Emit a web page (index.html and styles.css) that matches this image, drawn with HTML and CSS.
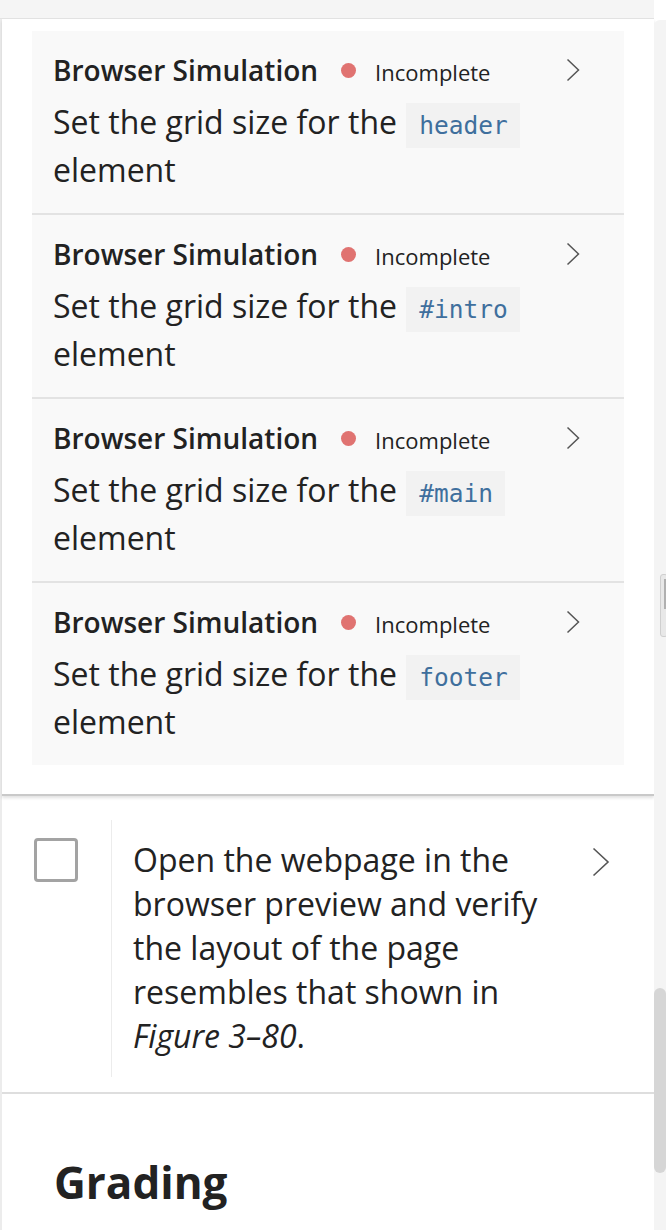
FILE: index.html
```html
<!DOCTYPE html>
<html lang="en">
<head>
  <meta charset="UTF-8">
  <title>Steps</title>
  <link rel="stylesheet" href="styles.css">
</head>
<body>

  <div class="page">
    <main class="content">
      <div class="top-band"></div>

      <section class="card card-tasks">
        <div class="task-list">
          <div class="task">
            <div class="task-head">
              <span class="task-type">Browser Simulation</span>
              <span class="dot"></span>
              <span class="status">Incomplete</span>
              <svg class="chevron" width="14" height="24" viewBox="0 0 14 24"><path d="M1.5 1.5 L12.5 12 L1.5 22.5" fill="none" stroke="#555" stroke-width="1.5"/></svg>
            </div>
            <p class="task-text">Set the grid size for the <code>header</code> element</p>
          </div>

          <div class="task">
            <div class="task-head">
              <span class="task-type">Browser Simulation</span>
              <span class="dot"></span>
              <span class="status">Incomplete</span>
              <svg class="chevron" width="14" height="24" viewBox="0 0 14 24"><path d="M1.5 1.5 L12.5 12 L1.5 22.5" fill="none" stroke="#555" stroke-width="1.5"/></svg>
            </div>
            <p class="task-text">Set the grid size for the <code>#intro</code> element</p>
          </div>

          <div class="task">
            <div class="task-head">
              <span class="task-type">Browser Simulation</span>
              <span class="dot"></span>
              <span class="status">Incomplete</span>
              <svg class="chevron" width="14" height="24" viewBox="0 0 14 24"><path d="M1.5 1.5 L12.5 12 L1.5 22.5" fill="none" stroke="#555" stroke-width="1.5"/></svg>
            </div>
            <p class="task-text">Set the grid size for the <code>#main</code> element</p>
          </div>

          <div class="task">
            <div class="task-head">
              <span class="task-type">Browser Simulation</span>
              <span class="dot"></span>
              <span class="status">Incomplete</span>
              <svg class="chevron" width="14" height="24" viewBox="0 0 14 24"><path d="M1.5 1.5 L12.5 12 L1.5 22.5" fill="none" stroke="#555" stroke-width="1.5"/></svg>
            </div>
            <p class="task-text">Set the grid size for the <code>footer</code> element</p>
          </div>
        </div>
      </section>

      <section class="card card-step">
        <div class="check-col">
          <span class="checkbox"></span>
        </div>
        <div class="step-body">
          <p class="step-text">Open the webpage in the browser preview and verify the layout of the page resembles that shown in <em>Figure 3–80</em>.</p>
          <svg class="chevron chevron-lg" width="18" height="30" viewBox="0 0 18 30"><path d="M1.5 1.5 L16 15 L1.5 28.5" fill="none" stroke="#555" stroke-width="1.6"/></svg>
        </div>
      </section>

      <section class="grading">
        <h2>Grading</h2>
      </section>
    </main>

    <div class="scroll-track">
      <div class="scroll-thumb"></div>
      <div class="mini-scroll"><span></span></div>
    </div>
  </div>

</body>
</html>
```

FILE: styles.css
```css
* {
  box-sizing: border-box;
}

body {
  margin: 0;
  font-family: "Open Sans", "Liberation Sans", sans-serif;
  color: #222;
  background: #fff;
}

.page {
  display: flex;
  height: 1230px;
  overflow: hidden;
}

.content {
  flex: 1;
  display: flex;
  flex-direction: column;
  border-left: 2px solid #ececec;
}

.top-band {
  height: 19px;
  background: #f5f5f5;
  border-bottom: 1px solid #e3e3e3;
  margin-left: -2px;
}

.card-tasks {
  padding: 12px 30px 29px;
  border-bottom: 2px solid #c9c9c9;
  box-shadow: 0 2px 3px rgba(0,0,0,0.12);
  position: relative;
}

.task-list {
  background: #f9f9f9;
}

.task {
  padding: 21px 44px 19px 21px;
  border-bottom: 2px solid #e3e3e3;
}

.task:last-child {
  border-bottom: none;
}

.task-head {
  display: flex;
  align-items: center;
  height: 36px;
}

.task-type {
  font-size: 28px;
  font-weight: 600;
}

.dot {
  width: 15px;
  height: 15px;
  border-radius: 50%;
  background: #e07371;
  margin: 0 19px 0 23px;
}

.status {
  font-size: 22px;
  margin-top: 3px;
}

.chevron {
  margin-left: auto;
}

.task-text {
  margin: 10px 0 0;
  font-size: 32px;
  line-height: 48px;
}

code {
  font-family: "DejaVu Sans Mono", monospace;
  font-size: 24.5px;
  line-height: 1;
  color: #3f6f9d;
  background: #f2f2f2;
  padding: 8px 12px 8px 13px;
  margin-left: 1px;
}

.card-step {
  display: flex;
  padding: 24px 44px 15px 32px;
  border-bottom: 2px solid #dedede;
}

.check-col {
  width: 77px;
  padding-top: 18px;
}

.checkbox {
  display: block;
  width: 44px;
  height: 44px;
  border: 3px solid #a3a3a3;
  border-radius: 4px;
}

.step-body {
  flex: 1;
  display: flex;
  border-left: 1px solid #ececec;
  padding: 18px 0 19px 21px;
}

.step-text {
  margin: 0;
  flex: 1;
  font-size: 32px;
  line-height: 44px;
  padding-right: 14px;
}

.chevron-lg {
  margin-top: 9px;
}

.grading {
  padding: 58px 0 0 52px;
}

.grading h2 {
  margin: 0;
  font-size: 44px;
  font-weight: 700;
}

.scroll-track {
  width: 12px;
  margin-top: 20px;
  background: #f4f4f4;
  border-top-left-radius: 6px;
  position: relative;
}

.scroll-thumb {
  margin-top: 968px;
  height: 185px;
  background: #d6d6d6;
  border-radius: 6px;
}

.mini-scroll {
  position: absolute;
  top: 554px;
  left: 6px;
  width: 8px;
  height: 63px;
  border: 1px solid #cfcfcf;
  border-radius: 3px;
  background: #e8e8e8;
}

.mini-scroll span {
  display: block;
  margin: 4px 0 0 3px;
  width: 4px;
  height: 30px;
  background: #b0b0b0;
}
```
